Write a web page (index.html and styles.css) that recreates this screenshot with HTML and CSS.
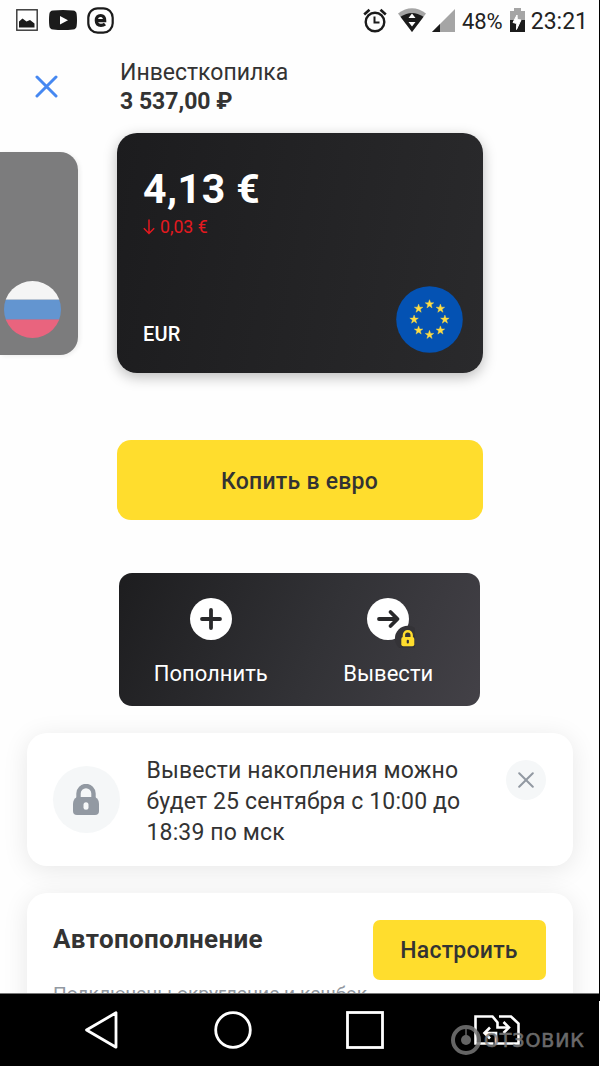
FILE: index.html
```html
<!DOCTYPE html>
<html lang="ru">
<head>
<meta charset="utf-8">
<title>Инвесткопилка</title>
<link rel="stylesheet" href="styles.css">
</head>
<body>
<div class="screen">
  <header class="status">
    <div class="status-left">
      <svg class="ic-photo" width="22" height="22" viewBox="0 0 22 22"><rect x=".8" y=".8" width="20.4" height="20.4" fill="none" stroke="#333" stroke-width="1.4"/><path d="M3 18.500V12.500l3.500-3 4 3 3.500-1.500 4.500 3.500v4z" fill="#1b1b1b"/></svg>
      <svg class="ic-tube" width="28" height="20" viewBox="0 0 28 20"><path d="M4 .5Q14-.5 24 .5q3.500.3 3.700 4 .6 5.500 0 11-.2 3.700-3.700 4-10 1-20 0-3.500-.3-3.700-4-.6-5.500 0-11Q.5.800 4 .500z" fill="#1b1b1b"/><path d="M11 6v8.500l8-4.300z" fill="#fff"/></svg>
      <svg width="27" height="27" viewBox="0 0 27 27"><rect x="1.300" y="1.300" width="24.400" height="24.400" rx="9.500" fill="none" stroke="#1b1b1b" stroke-width="2.200"/><path d="M18 17q-1.500 1.300-4 1.300c-3.500 0-4.700-1.800-4.700-4.800 0-3.200 1.500-5 4.400-5 2.800 0 4 1.700 4 5.200H10" fill="none" stroke="#1b1b1b" stroke-width="3.200"/></svg>
    </div>
    <div class="status-right">
      <svg class="ic-alarm" width="24" height="25" viewBox="0 0 24 25"><circle cx="12" cy="14" r="9.300" fill="none" stroke="#1b1b1b" stroke-width="2.400"/><path d="M1.200 6.500 6.500 1.700M22.800 6.500 17.500 1.700" stroke="#1b1b1b" stroke-width="2.600"/><path d="M11.500 8.500v6h5" fill="none" stroke="#1b1b1b" stroke-width="2"/></svg>
      <svg class="ic-wifi" width="28" height="24" viewBox="0 0 28 24"><path d="M0 5.500Q14-5 28 5.500L14 24z" fill="#a5a5a5"/><path d="M2.500 8.800Q14 1 25.500 8.800L14 24z" fill="#1b1b1b"/><path d="M10.500 10 14 5.500l3.500 4.500zM10.500 14 14 18.500l3.500-4.500z" fill="#fff"/></svg>
      <svg class="ic-signal" width="23" height="23" viewBox="0 0 23 23"><path d="M23 0v23H0z" fill="#a5a5a5"/><path d="M8 15v8H0z" fill="#1b1b1b"/></svg>
      <span class="status-text percent">48%</span>
      <svg class="ic-battery" width="15" height="24" viewBox="0 0 15 24"><path d="M4 0h7v3h4v9H0V3h4z" fill="#a5a5a5"/><path d="M0 12h15v12H0z" fill="#1b1b1b"/><path d="m7 7 .3 4.500 3.700.5-4.500 9.500.2-6-3.700-1z" fill="#fff" stroke="#fff"/></svg>
      <span class="status-text">23:21</span>
    </div>
  </header>

  <div class="topbar">
    <svg class="close" width="24" height="24" viewBox="0 0 24 24"><path d="m2 2 19 19m0-19-19 19" stroke="#4688f1" stroke-width="3" stroke-linecap="round"/></svg>
    <div class="heading">
      <div class="heading-title">Инвесткопилка</div>
      <div class="heading-sum">3 537,00 ₽</div>
    </div>
  </div>

  <section class="carousel">
    <div class="prev-card">
      <svg width="58" height="58" viewBox="0 0 58 58"><clipPath id="flag"><circle cx="29.500" cy="28.500" r="28.500"/></clipPath><g clip-path="url(#flag)"><path d="M0 0h58v18.700H0z" fill="#f5f5f5"/><path d="M0 18.700h58v20H0z" fill="#6395d0"/><path d="M0 38.500h58v20H0z" fill="#e9647e"/></g></svg>
    </div>
    <div class="card">
      <div>
        <div class="amount">4,13 €</div>
        <div class="delta"><svg width="12" height="16" viewBox="0 0 12 16"><path d="M6 .5v14M.8 9.300 6 14.500l5.200-5.200" fill="none" stroke="#e5191f" stroke-width="1.500"/></svg><span>0,03 €</span></div>
      </div>
      <div class="card-foot">
        <span class="currency">EUR</span>
        <svg class="eu" width="67" height="67" viewBox="-33.500 -33.500 67 67"><defs><path id="star" d="M0-4.500 1.100-1.400 4.300-1.400 1.700.6 2.600 3.700 0 1.800-2.600 3.700-1.700.6-4.300-1.400-1.100-1.400z" fill="#ffdd43" stroke="#ffdd43" stroke-width=".4"/></defs><circle r="33.300" fill="#0452b3"/><use href="#star" y="-15.300"/><use href="#star" x="10.900" y="-10.900"/><use href="#star" x="15.400"/><use href="#star" x="10.900" y="10.900"/><use href="#star" y="15.300"/><use href="#star" x="-10.900" y="10.900"/><use href="#star" x="-15.400"/><use href="#star" x="-10.900" y="-10.900"/></svg>
      </div>
    </div>
  </section>

  <button class="save">Копить в евро</button>

  <div class="actions">
    <div class="action">
      <svg width="54" height="50" viewBox="-27 -21 54 50"><circle r="21" fill="#fff"/><path d="M-9 0H9M0-9V9" stroke="#29292b" stroke-width="3.800" stroke-linecap="round"/></svg>
      <span>Пополнить</span>
    </div>
    <div class="action">
      <svg width="54" height="50" viewBox="-27 -21 54 50"><circle r="21" fill="#fff"/><path d="M-9 0H9M2.500-7 9.500 0 2.500 7" fill="none" stroke="#29292b" stroke-width="3.800" stroke-linecap="round" stroke-linejoin="round"/><circle cx="19.700" cy="19.500" r="12.800" fill="#343337"/><path d="M15.900 19.500v-3.300a3.900 3.900 0 0 1 7.800 0v3.300" fill="none" stroke="#ffdd2d" stroke-width="2.400"/><rect x="13.300" y="18" width="13" height="9.300" rx="2" fill="#ffdd2d"/><rect x="18.700" y="20.800" width="2.200" height="3.800" rx="1" fill="#343337"/></svg>
      <span>Вывести</span>
    </div>
  </div>

  <div class="panel notice">
    <div class="lock"><svg width="26" height="31" viewBox="0 0 26 31"><path d="M5.500 16V9.500a7.500 7.500 0 0 1 15 0V16" fill="none" stroke="#9299a2" stroke-width="4.400"/><path d="M4 13h18q4 2 4 7v7q0 4-4 4H4q-4 0-4-4v-7q0-5 4-7z" fill="#9299a2"/><rect x="10.500" y="18.300" width="5" height="7.500" rx="2.500" fill="#f5f7f8"/></svg></div>
    <p class="notice-text">Вывести накопления можно<br>будет 25 сентября с 10:00 до<br>18:39 по мск</p>
    <div class="dismiss"><svg width="16" height="16" viewBox="0 0 16 16"><path d="m1.200 1.200 13.600 13.600m0-13.600L1.200 14.800" stroke="#9299a2" stroke-width="2" stroke-linecap="round"/></svg></div>
  </div>

  <div class="panel auto">
    <div class="auto-text">
      <h2>Автопополнение</h2>
      <p>Подключены округление и кешбэк</p>
    </div>
    <button class="setup">Настроить</button>
  </div>

  <nav class="navbar">
    <svg class="nav-back" width="34" height="38" viewBox="0 0 34 38"><path d="M32 1.800v34.400L2.500 19z" fill="none" stroke="#fff" stroke-width="2.800" stroke-linejoin="round"/></svg>
    <svg class="nav-home" width="38" height="38" viewBox="0 0 38 38"><circle cx="19" cy="19" r="17.300" fill="none" stroke="#fff" stroke-width="2.800"/></svg>
    <svg class="nav-recent" width="38" height="38" viewBox="0 0 38 38"><rect x="1.500" y="1.500" width="35" height="35" fill="none" stroke="#fff" stroke-width="2.800"/></svg>
    <svg class="nav-sim" width="46" height="30" viewBox="0 0 46 30"><g fill="none" stroke="#fff" stroke-width="2.600"><path d="M19.500 28.500h-18v-27h17l5 6v5h11M25 1.500h12l7.500 7v20H22V18H11"/><path d="m29.500 7 5.500 5.500-5.500 5.500M16 12.500 10.500 18l5.500 5.500"/></g></svg>
    <div class="watermark">
      <svg width="32" height="32" viewBox="0 0 32 32"><circle cx="16" cy="16" r="13" fill="none" stroke="#777" stroke-width="4"/><path d="M16 4v9" stroke="#777" stroke-width="1.500"/><circle cx="16" cy="16" r="5" fill="#777"/></svg>
      <span>ОТЗОВИК</span>
    </div>
  </nav>
  <div class="edge"></div>
</div>
</body>
</html>
```
FILE: styles.css
```css
* { box-sizing: border-box; }
body, h2, p { margin: 0; }
body { font-family: Roboto, "Noto Sans", sans-serif; color: #333; background: #fefefe; }
button { border: 0; padding: 0; font: inherit; color: #333; background: #ffdd2d; font-weight: 500; }
svg { display: block; flex: none; }
.screen { position: relative; width: 600px; height: 1066px; overflow: hidden; display: flex; flex-direction: column; }
.status { height: 50px; flex: none; display: flex; justify-content: space-between; align-items: flex-start; padding: 7px 12px 0 16px; }
.status-left, .status-right { display: flex; align-items: flex-start; }
.status-left { gap: 10px; }
.ic-photo { margin-top: 2px; }
.ic-tube { margin: 3px 0 0 1px; }
.status-right { padding-top: 1px; }
.ic-wifi { margin-left: 11px; }
.ic-signal { margin: 1px 0 0 6px; }
.ic-battery { margin: 0 6px 0 7px; }
.status-text { font-size: 23px; line-height: 27px; color: #222; white-space: nowrap; }
.percent { margin-left: 7px; font-size: 22px; }
.topbar { height: 83px; flex: none; display: flex; align-items: flex-start; padding: 8px 0 0 35px; gap: 61px; }
.close { margin-top: 17px; }
.heading { white-space: nowrap; font-size: 23px; line-height: 29px; }
.heading-sum { font-weight: 700; }
.carousel { height: 240px; flex: none; display: flex; gap: 39px; align-items: flex-start; }
.prev-card { width: 77.5px; height: 203px; margin-top: 18.5px; border-radius: 0 18px 18px 0; background: #7c7c7d; padding: 129px 0 0 3px; box-shadow: 2px 1px 4px #0001; }
.card { width: 366px; height: 240px; border-radius: 20px; background: linear-gradient(100deg, #1c1c1e, #2a2a2c); padding: 32px 20px 20px 26.5px; box-shadow: 0 4px 14px #0004; display: flex; flex-direction: column; justify-content: space-between; color: #fff; }
.amount { font-size: 41px; line-height: 48px; font-weight: 700; letter-spacing: .5px; }
.delta { display: flex; gap: 5px; align-items: center; font-size: 17.7px; line-height: 28px; color: #e5191f; }
.card-foot { display: flex; justify-content: space-between; align-items: flex-end; }
.currency { font-size: 20px; line-height: 24px; font-weight: 500; margin-bottom: 7px; letter-spacing: .2px; }
.save { width: 366px; height: 80px; flex: none; margin: 66.5px 0 0 116.500px; border-radius: 14px; font-size: 23px; letter-spacing: .25px; padding-top: 3px; }
.actions { width: 361px; height: 133px; flex: none; margin: 53.5px 0 0 119px; padding: 25px 3px 0; border-radius: 13px; background: linear-gradient(115deg, #1d1d1f, #323236 55%, #434147); display: grid; grid-template-columns: 1fr 1fr; color: #fff; font-size: 22px; }
.action { display: flex; flex-direction: column; align-items: center; gap: 12px; line-height: 28px; }
.panel { width: 546px; flex: none; margin-left: 26.5px; border-radius: 20px; background: #fff; box-shadow: 0 4px 26px #00000018; display: flex; align-items: flex-start; }
.notice { height: 133px; margin-top: 27px; padding: 22px 26px 0 26px; }
.lock { width: 67px; height: 67px; margin-top: 11px; border-radius: 50%; background: #f5f7f8; display: grid; place-items: center; }
.notice-text { margin-left: 27px; width: 332px; font-size: 23px; line-height: 31px; white-space: nowrap; letter-spacing: .14px; }
.dismiss { width: 40px; height: 40px; margin: 5px 0 0 27px; flex: none; border-radius: 50%; background: #f5f7f8; display: grid; place-items: center; }
.auto { height: 133px; margin-top: 27px; padding: 26.5px 27px 0 26.5px; justify-content: space-between; }
.auto-text { white-space: nowrap; }
h2 { font-size: 26px; line-height: 38px; font-weight: 700; letter-spacing: .35px; }
.auto-text p { margin-top: 24px; font-size: 19.2px; line-height: 24px; color: #9299a2; }
.setup { width: 173px; height: 60px; flex: none; border-radius: 7px; font-size: 23px; padding-top: 2px; letter-spacing: .25px; }
.navbar { position: absolute; left: 0; right: 0; bottom: 0; height: 73px; background: #000; border-top: 1px solid #777; display: flex; align-items: flex-start; padding: 17px 0 0 83.500px; }
.nav-home { margin-left: 96px; }
.nav-recent { margin-left: 94px; }
.nav-sim { margin: 4px 0 0 90px; }
.watermark { position: absolute; left: 450px; top: 30px; display: flex; gap: 2px; opacity: .85; color: #7d7d7d; font: 19px/32px "DejaVu Sans", sans-serif; letter-spacing: .9px; -webkit-text-stroke: .6px #7d7d7d; }
.edge { position: absolute; right: 0; top: 0; width: 1px; height: 1066px; background: linear-gradient(#000 1001px, #fff 1001px); }
```
